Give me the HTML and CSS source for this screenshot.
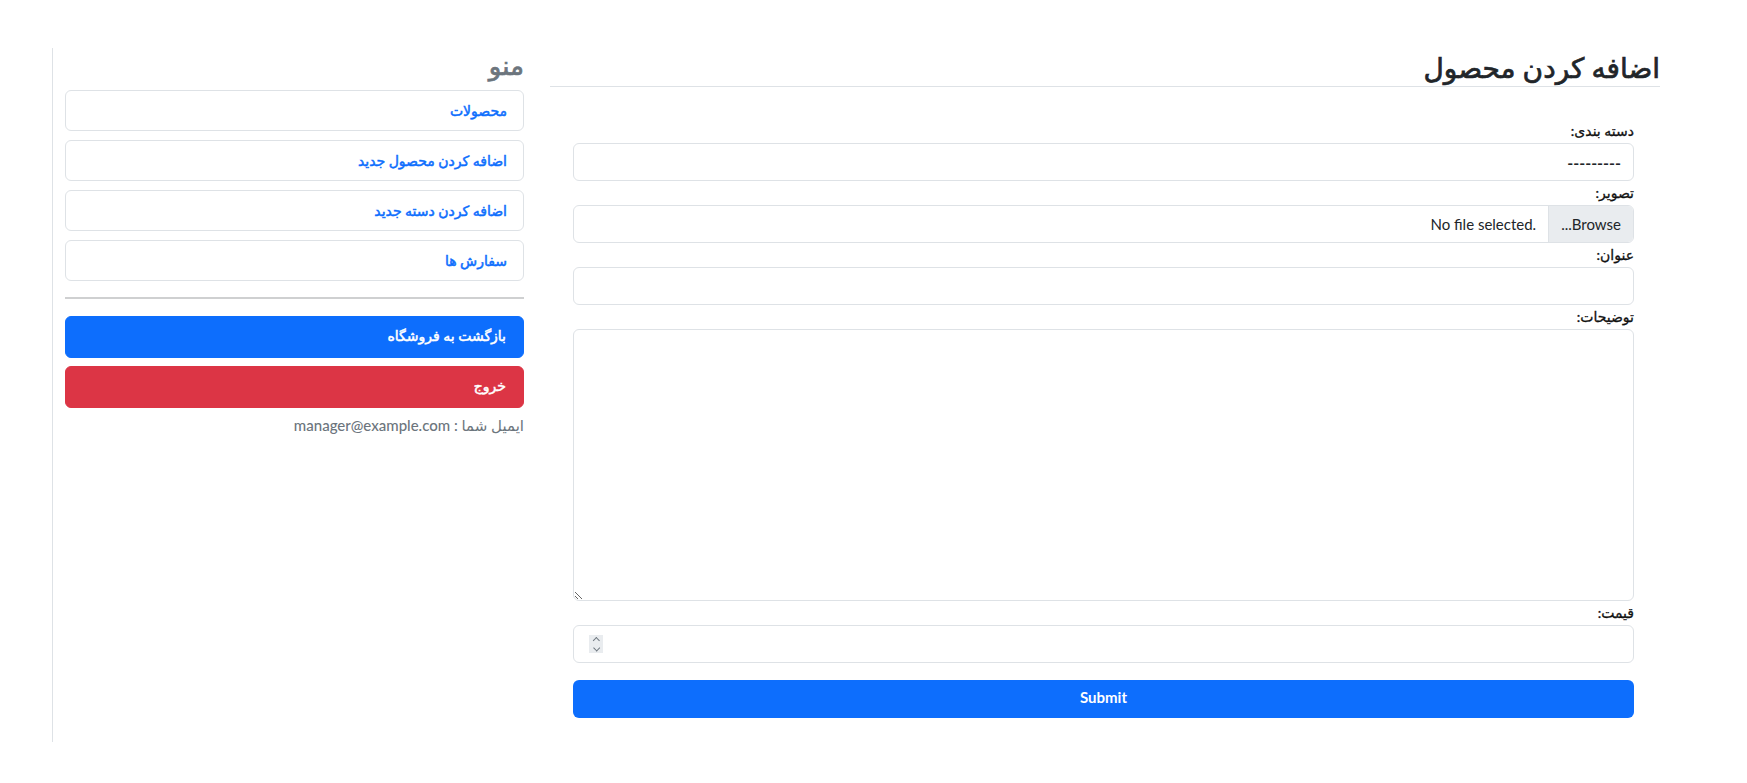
FILE: index.html
```html
<!DOCTYPE html>
<html lang="fa" dir="rtl">
<head>
<meta charset="utf-8">
<title>اضافه کردن محصول</title>
<link rel="stylesheet" href="styles.css">
</head>
<body>
<div class="page">
  <main class="main">
    <h2 class="title">اضافه کردن محصول</h2>
    <form class="form">
      <label class="label">دسته بندی:</label>
      <select class="control select"><option>---------</option></select>
      <label class="label">تصویر:</label>
      <div class="control file">
        <span class="file-btn" dir="ltr">...Browse</span>
        <span class="file-name" dir="ltr">No file selected.</span>
      </div>
      <label class="label">عنوان:</label>
      <input class="control" type="text">
      <label class="label">توضیحات:</label>
      <textarea class="control area"></textarea>
      <label class="label">قیمت:</label>
      <div class="control number">
        <span class="spin"><span class="spin-up"></span><span class="spin-down"></span></span>
      </div>
      <button type="button" class="submit">Submit</button>
    </form>
  </main>
  <aside class="side">
    <h3 class="side-title">منو</h3>
    <a class="side-item">محصولات</a>
    <a class="side-item">اضافه کردن محصول جدید</a>
    <a class="side-item">اضافه کردن دسته جدید</a>
    <a class="side-item">سفارش ها</a>
    <div class="side-hr"></div>
    <a class="side-btn blue">بازگشت به فروشگاه</a>
    <a class="side-btn red">خروج</a>
    <p class="email">ایمیل شما : manager@example.com</p>
  </aside>
</div>
</body>
</html>
```
FILE: styles.css
```css
* { box-sizing: border-box; }
body {
  margin: 0;
  background: #fff;
  color: #212529;
  font-family: "Lato", "DejaVu Sans", sans-serif;
}
.page {
  direction: rtl;
  display: flex;
  align-items: flex-start;
  padding: 48px 75px 0 52px;
}
.main {
  width: 1134px;
  padding: 0 12px;
}
.title {
  margin: 0;
  font-size: 28px;
  line-height: 38px;
  font-weight: 500;
  -webkit-text-stroke: 0.7px currentColor;
  border-bottom: 1px solid #dee2e6;
}
.form {
  margin: 32px 26px 0 23px;
  display: flex;
  flex-direction: column;
}
.label {
  display: block;
  font-size: 14px;
  line-height: 24px;
  font-weight: 500;
  color: #111;
  -webkit-text-stroke: 0.3px currentColor;
}
.control {
  display: block;
  width: 100%;
  height: 38px;
  border: 1px solid #dee2e6;
  border-radius: 6px;
  background: #fff;
  font-family: inherit;
  font-size: 15px;
  color: #212529;
  padding: 0 12px;
  margin: 0;
}
.select {
  appearance: none;
  -webkit-appearance: none;
  font-size: 16px;
  font-weight: 700;
  direction: rtl;
}
.file {
  display: flex;
  align-items: stretch;
  padding: 0;
  overflow: hidden;
}
.file-btn {
  display: flex;
  align-items: center;
  padding: 0 12px;
  background: #e9ecef;
  border-left: 1px solid #dee2e6;
  font-size: 15px;
}
.file-name {
  display: flex;
  align-items: center;
  padding: 0 12px;
  font-size: 15px;
}
.area {
  height: 272px;
  resize: vertical;
  padding: 6px 12px;
}
.number {
  display: flex;
  align-items: center;
  justify-content: flex-end;
}
.spin {
  width: 14px;
  height: 18px;
  background: #e9ecef;
  display: flex;
  flex-direction: column;
  align-items: center;
  justify-content: center;
  gap: 3px;
  margin-left: 3px;
}
.spin-up, .spin-down {
  width: 5px;
  height: 5px;
  border-left: 1px solid #6c757d;
  border-top: 1px solid #6c757d;
}
.spin-up { transform: rotate(45deg); margin-top: 3px; }
.spin-down { transform: rotate(-135deg); margin-bottom: 3px; }
.submit {
  margin-top: 17px;
  height: 38px;
  width: 100%;
  border: none;
  border-radius: 6px;
  background: #0d6efd;
  color: #fff;
  font-family: inherit;
  font-weight: 700;
  font-size: 15px;
  padding: 0 0 4px;
}
.side {
  width: 486px;
  min-height: 694px;
  border-left: 1px solid #dee2e6;
  padding: 0 14px 0 12px;
  display: flex;
  flex-direction: column;
}
.side-title {
  margin: 0 0 8px;
  font-size: 26px;
  line-height: 34px;
  font-weight: 500;
  color: #6c757d;
  -webkit-text-stroke: 0.7px currentColor;
}
.side-item {
  display: block;
  height: 41px;
  line-height: 39px;
  border: 1px solid #dee2e6;
  border-radius: 6px;
  padding: 0 16px;
  margin-bottom: 9px;
  color: #0d6efd;
  font-size: 14px;
  font-weight: 500;
  -webkit-text-stroke: 0.5px currentColor;
}
.side-hr {
  height: 2px;
  background: #cfd0d1;
  margin: 7px 0 17px;
}
.side-btn {
  display: block;
  height: 42px;
  border-radius: 6px;
  padding: 0 17px;
  margin-bottom: 8px;
  color: #fff;
  font-size: 14px;
  font-weight: 500;
  -webkit-text-stroke: 0.5px currentColor;
}
.blue { background: #0d6efd; border: 1px solid #0d6efd; line-height: 38px; }
.red { background: #dc3545; border: 1px solid #dc3545; line-height: 38px; }
.email {
  margin: 0;
  font-size: 15px;
  line-height: 18px;
  color: #6c757d;
  font-weight: 500;
}
```
